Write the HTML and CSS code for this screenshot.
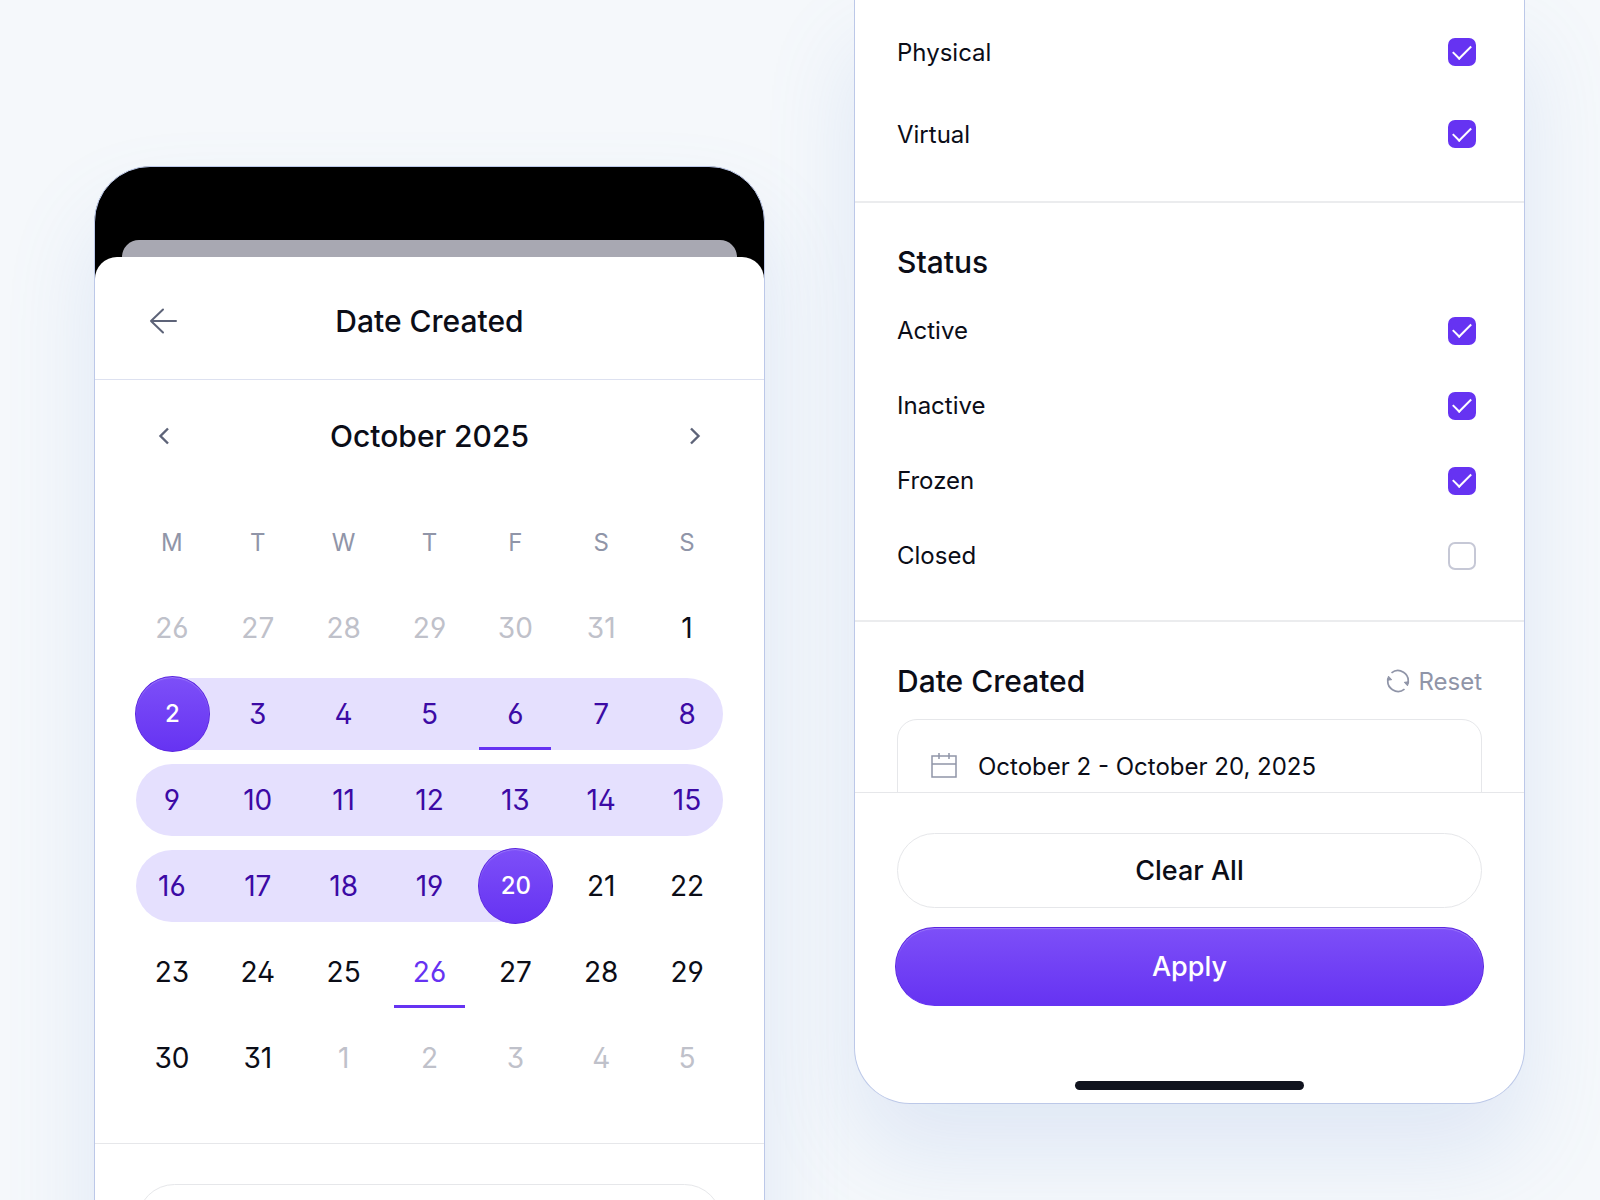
FILE: index.html
```html
<!DOCTYPE html>
<html lang="en">

<head>
    <meta charset="UTF-8">
    <meta name="viewport" content="width=device-width, initial-scale=1.0">
    <title>Date Created</title>
    <link rel="stylesheet" href="styles.css">
</head>

<body>
    <main class="stage">
        <!-- Date picker -->
        <section class="phone phone--picker">
            <div class="backdrop">
                <div class="backdrop__sheet"></div>
            </div>
            <div class="sheet">
                <header class="sheet__header">
                    <button class="icon-button" type="button" aria-label="Back">
                        <svg width="28" height="26" viewBox="0 0 28 26" fill="none" stroke="currentColor" stroke-width="2" stroke-linecap="round" stroke-linejoin="round">
                            <path d="M14 1.500L2 13l12 11.500M2 13H27" />
                        </svg>
                    </button>
                    <h1 class="title">Date Created</h1>
                </header>

                <div class="calendar">
                    <div class="calendar__nav">
                        <button class="icon-button" type="button" aria-label="Previous month">
                            <svg width="28" height="26" viewBox="0 0 28 26" fill="none" stroke="currentColor" stroke-width="2.400">
                                <path d="M18 5.500L10.500 13L18 20.500" />
                            </svg>
                        </button>
                        <h2 class="title">October 2025</h2>
                        <button class="icon-button" type="button" aria-label="Next month">
                            <svg width="28" height="26" viewBox="0 0 28 26" fill="none" stroke="currentColor" stroke-width="2.400">
                                <path d="M10 5.500L17.500 13L10 20.500" />
                            </svg>
                        </button>
                    </div>

                    <div class="week week--names">
                        <span>M</span><span>T</span><span>W</span><span>T</span><span>F</span><span>S</span><span>S</span>
                    </div>
                    <div class="week">
                        <button class="day day--muted" type="button">26</button>
                        <button class="day day--muted" type="button">27</button>
                        <button class="day day--muted" type="button">28</button>
                        <button class="day day--muted" type="button">29</button>
                        <button class="day day--muted" type="button">30</button>
                        <button class="day day--muted" type="button">31</button>
                        <button class="day" type="button">1</button>
                    </div>
                    <div class="week">
                        <div class="range"></div>
                        <button class="day day--selected" type="button">2</button>
                        <button class="day day--in-range" type="button">3</button>
                        <button class="day day--in-range" type="button">4</button>
                        <button class="day day--in-range" type="button">5</button>
                        <button class="day day--in-range day--marked" type="button">6</button>
                        <button class="day day--in-range" type="button">7</button>
                        <button class="day day--in-range" type="button">8</button>
                    </div>
                    <div class="week">
                        <div class="range"></div>
                        <button class="day day--in-range" type="button">9</button>
                        <button class="day day--in-range" type="button">10</button>
                        <button class="day day--in-range" type="button">11</button>
                        <button class="day day--in-range" type="button">12</button>
                        <button class="day day--in-range" type="button">13</button>
                        <button class="day day--in-range" type="button">14</button>
                        <button class="day day--in-range" type="button">15</button>
                    </div>
                    <div class="week">
                        <div class="range range--to-friday"></div>
                        <button class="day day--in-range" type="button">16</button>
                        <button class="day day--in-range" type="button">17</button>
                        <button class="day day--in-range" type="button">18</button>
                        <button class="day day--in-range" type="button">19</button>
                        <button class="day day--selected" type="button">20</button>
                        <button class="day" type="button">21</button>
                        <button class="day" type="button">22</button>
                    </div>
                    <div class="week">
                        <button class="day" type="button">23</button>
                        <button class="day" type="button">24</button>
                        <button class="day" type="button">25</button>
                        <button class="day day--today day--marked" type="button">26</button>
                        <button class="day" type="button">27</button>
                        <button class="day" type="button">28</button>
                        <button class="day" type="button">29</button>
                    </div>
                    <div class="week">
                        <button class="day" type="button">30</button>
                        <button class="day" type="button">31</button>
                        <button class="day day--muted" type="button">1</button>
                        <button class="day day--muted" type="button">2</button>
                        <button class="day day--muted" type="button">3</button>
                        <button class="day day--muted" type="button">4</button>
                        <button class="day day--muted" type="button">5</button>
                    </div>
                </div>

                <footer class="actions">
                    <button class="button" type="button" aria-label="Clear"></button>
                </footer>
            </div>
        </section>

        <!-- Filters -->
        <section class="phone phone--filters">
            <div class="group group--type">
                <label class="option">Physical <input class="checkbox" type="checkbox" checked></label>
                <label class="option">Virtual <input class="checkbox" type="checkbox" checked></label>
            </div>

            <div class="group group--status">
                <h2 class="title">Status</h2>
                <label class="option">Active <input class="checkbox" type="checkbox" checked></label>
                <label class="option">Inactive <input class="checkbox" type="checkbox" checked></label>
                <label class="option">Frozen <input class="checkbox" type="checkbox" checked></label>
                <label class="option">Closed <input class="checkbox" type="checkbox"></label>
            </div>

            <div class="group group--date">
                <div class="group__header">
                    <label class="title" for="date-range">Date Created</label>
                    <button class="reset" type="button">
                        <svg width="24" height="24" viewBox="0 0 24 24" fill="none" stroke="currentColor" stroke-width="1.700">
                            <path d="M5.500 3.800A10.300 10.300 0 0 1 21.800 14.500" />
                            <path d="M18.500 20.200A10.300 10.300 0 0 1 2.200 9.500" />
                            <path d="M18.300 13.300L21.500 16.800L22.800 12.800z" fill="currentColor" stroke-width="1" />
                            <path d="M5.700 10.700L2.500 7.200L1.200 11.200z" fill="currentColor" stroke-width="1" />
                        </svg>
                        Reset
                    </button>
                </div>
                <div class="field">
                    <svg width="28" height="28" viewBox="0 0 28 28" fill="none" stroke="currentColor" stroke-width="1.500">
                        <path d="M2 4H26V25H2zM2 12H26M9 1V7M19 1V7" />
                    </svg>
                    <input class="field__input" id="date-range" type="text" value="October 2 - October 20, 2025">
                </div>
            </div>

            <footer class="actions">
                <button class="button" type="button">Clear All</button>
                <button class="button button--primary" type="button">Apply</button>
            </footer>
            <div class="home-bar"></div>
        </section>
    </main>
</body>

</html>
```
FILE: styles.css
```css
:root {
    --page: #f5f8fb;
    --text: #0b0d17;
    --icon: #5d6378;
    --secondary: #9095a8;
    --muted: #bfc1ca;
    --line: #e6e7ea;
    --phone-line: #bcc8e8;
    --violet: #6633f2;
    --violet-light: #7d4ff8;
    --violet-dark: #5a25e0;
    --range: #e5e0fe;
    --range-text: #3c0aa5;
}

* {
    box-sizing: border-box;
}

body {
    margin: 0;
    background-color: var(--page);
    color: var(--text);
    font-family: Inter, "Liberation Sans", sans-serif;
}

button,
input {
    font: inherit;
    color: inherit;
    margin: 0;
}

button {
    padding: 0;
    border: 0;
    background: none;
    cursor: pointer;
}

svg {
    display: block;
    flex: none;
}

.stage {
    display: grid;
    grid-template-columns: 1fr 1fr;
    gap: 89px;
    align-items: start;
    height: 100vh;
    padding: 0 75px 0 94px;
    overflow: hidden;
}

.phone {
    background-color: #fff;
    border: 1px solid var(--phone-line);
    box-shadow: 0 50px 90px rgba(110, 150, 220, .16);
}

.phone--picker {
    margin-top: 166px;
    border-radius: 56px 56px 0 0;
    background-color: #000;
    overflow: hidden;
}

.phone--filters {
    border-top: 0;
    border-radius: 0 0 56px 56px;
}

.title {
    margin: 0;
    font-size: 30px;
    font-weight: 500;
    line-height: 40px;
}

/* Sheets stacked behind the picker */

.backdrop {
    padding: 73px 27px 0;
}

.backdrop__sheet {
    height: 17px;
    border-radius: 17px 17px 0 0;
    background-color: #a8a8b2;
}

.sheet {
    background-color: #fff;
    border-radius: 22px 22px 0 0;
}

.sheet__header {
    display: grid;
    grid-template-columns: 28px 1fr 28px;
    align-items: center;
    padding: 44px 54px 38px;
    border-bottom: 1px solid #dde1f0;
    text-align: center;
}

.icon-button {
    color: var(--icon);
}

.calendar {
    display: grid;
    gap: 14px;
    padding: 36px 41px 49px;
}

.calendar__nav {
    display: flex;
    justify-content: space-between;
    align-items: center;
    padding: 0 14px;
    margin-bottom: 36px;
}

.week {
    display: grid;
    grid-template-columns: repeat(7, 1fr);
    column-gap: 14px;
    height: 72px;
}

.week--names {
    align-items: center;
    color: var(--secondary);
    font-size: 24px;
    text-align: center;
}

.day {
    grid-row: 1;
    font-size: 28px;
    line-height: 72px;
    font-feature-settings: "ss01", "cv09";
}

.day--muted {
    color: var(--muted);
}

.day--in-range {
    color: var(--range-text);
}

.day--today {
    color: var(--violet);
}

.day--marked {
    box-shadow: inset 0 -3px var(--violet);
}

.day--selected {
    margin: -2px -2px -2px -1px;
    border: 1px solid var(--violet-dark);
    border-radius: 50%;
    background: linear-gradient(var(--violet-light), var(--violet));
    box-shadow: inset 0 1px 1px rgba(255, 255, 255, .25);
    color: #fff;
    font-size: 24px;
    font-weight: 500;
}

.range {
    grid-row: 1;
    grid-column: 1 / -1;
    border-radius: 36px;
    background-color: var(--range);
}

.range ~ .day:nth-child(2) { grid-column: 1; }
.range ~ .day:nth-child(3) { grid-column: 2; }
.range ~ .day:nth-child(4) { grid-column: 3; }
.range ~ .day:nth-child(5) { grid-column: 4; }
.range ~ .day:nth-child(6) { grid-column: 5; }
.range ~ .day:nth-child(7) { grid-column: 6; }
.range ~ .day:nth-child(8) { grid-column: 7; }

.range--to-friday {
    grid-column: 1 / 6;
}

/* Filter groups */

.group {
    padding: 39px 42px 27px;
    border-bottom: 2px solid #ebecee;
}

.group--type {
    padding-top: 11px;
    padding-bottom: 26px;
}

.group--type .option {
    height: 82px;
}

.group--status .title {
    margin-bottom: 11px;
}

.group--date {
    padding-bottom: 0;
    border-bottom: 0;
}

.group__header {
    display: flex;
    justify-content: space-between;
    align-items: center;
    margin-bottom: 18px;
}

.option {
    display: flex;
    justify-content: space-between;
    align-items: center;
    height: 75px;
    padding-right: 6px;
    font-size: 24px;
}

.checkbox {
    appearance: none;
    display: grid;
    place-items: center;
    width: 28px;
    height: 28px;
    border: 2px solid #c6c8d6;
    border-radius: 7px;
}

.checkbox:checked {
    border-color: var(--violet);
    background-color: var(--violet);
}

.checkbox:checked::before {
    content: "";
    width: 16px;
    height: 8px;
    margin-top: -5px;
    border: solid #fff;
    border-width: 0 0 2px 2px;
    transform: rotate(-45deg);
}

.reset {
    display: flex;
    align-items: center;
    gap: 8px;
    color: var(--secondary);
    font-size: 24px;
}

.field {
    display: flex;
    align-items: center;
    gap: 20px;
    height: 94px;
    padding: 0 32px;
    border: 1px solid var(--line);
    border-radius: 20px;
    color: var(--secondary);
}

.field__input {
    flex: 1;
    min-width: 0;
    padding: 0;
    border: 0;
    outline: 0;
    background: none;
    color: var(--text);
    font-size: 24px;
}

/* Buttons pinned under the scrolled content */

.actions {
    position: relative;
    display: grid;
    gap: 19px;
    padding: 40px 42px 0;
    border-top: 1px solid var(--line);
    background-color: #fff;
}

.phone--filters .actions {
    margin-top: -21px;
}

.button {
    height: 75px;
    border: 1px solid var(--line);
    border-radius: 40px;
    font-size: 27px;
    font-weight: 500;
}

.button--primary {
    height: 79px;
    margin: 0 -2px;
    border-color: var(--violet-dark);
    border-bottom-color: var(--violet);
    background: linear-gradient(var(--violet-light), var(--violet));
    box-shadow: inset 0 1px 1px rgba(255, 255, 255, .25);
    color: #fff;
}

.home-bar {
    width: 229px;
    height: 9px;
    margin: 75px auto 13px;
    border-radius: 5px;
    background-color: #10131e;
}
```
